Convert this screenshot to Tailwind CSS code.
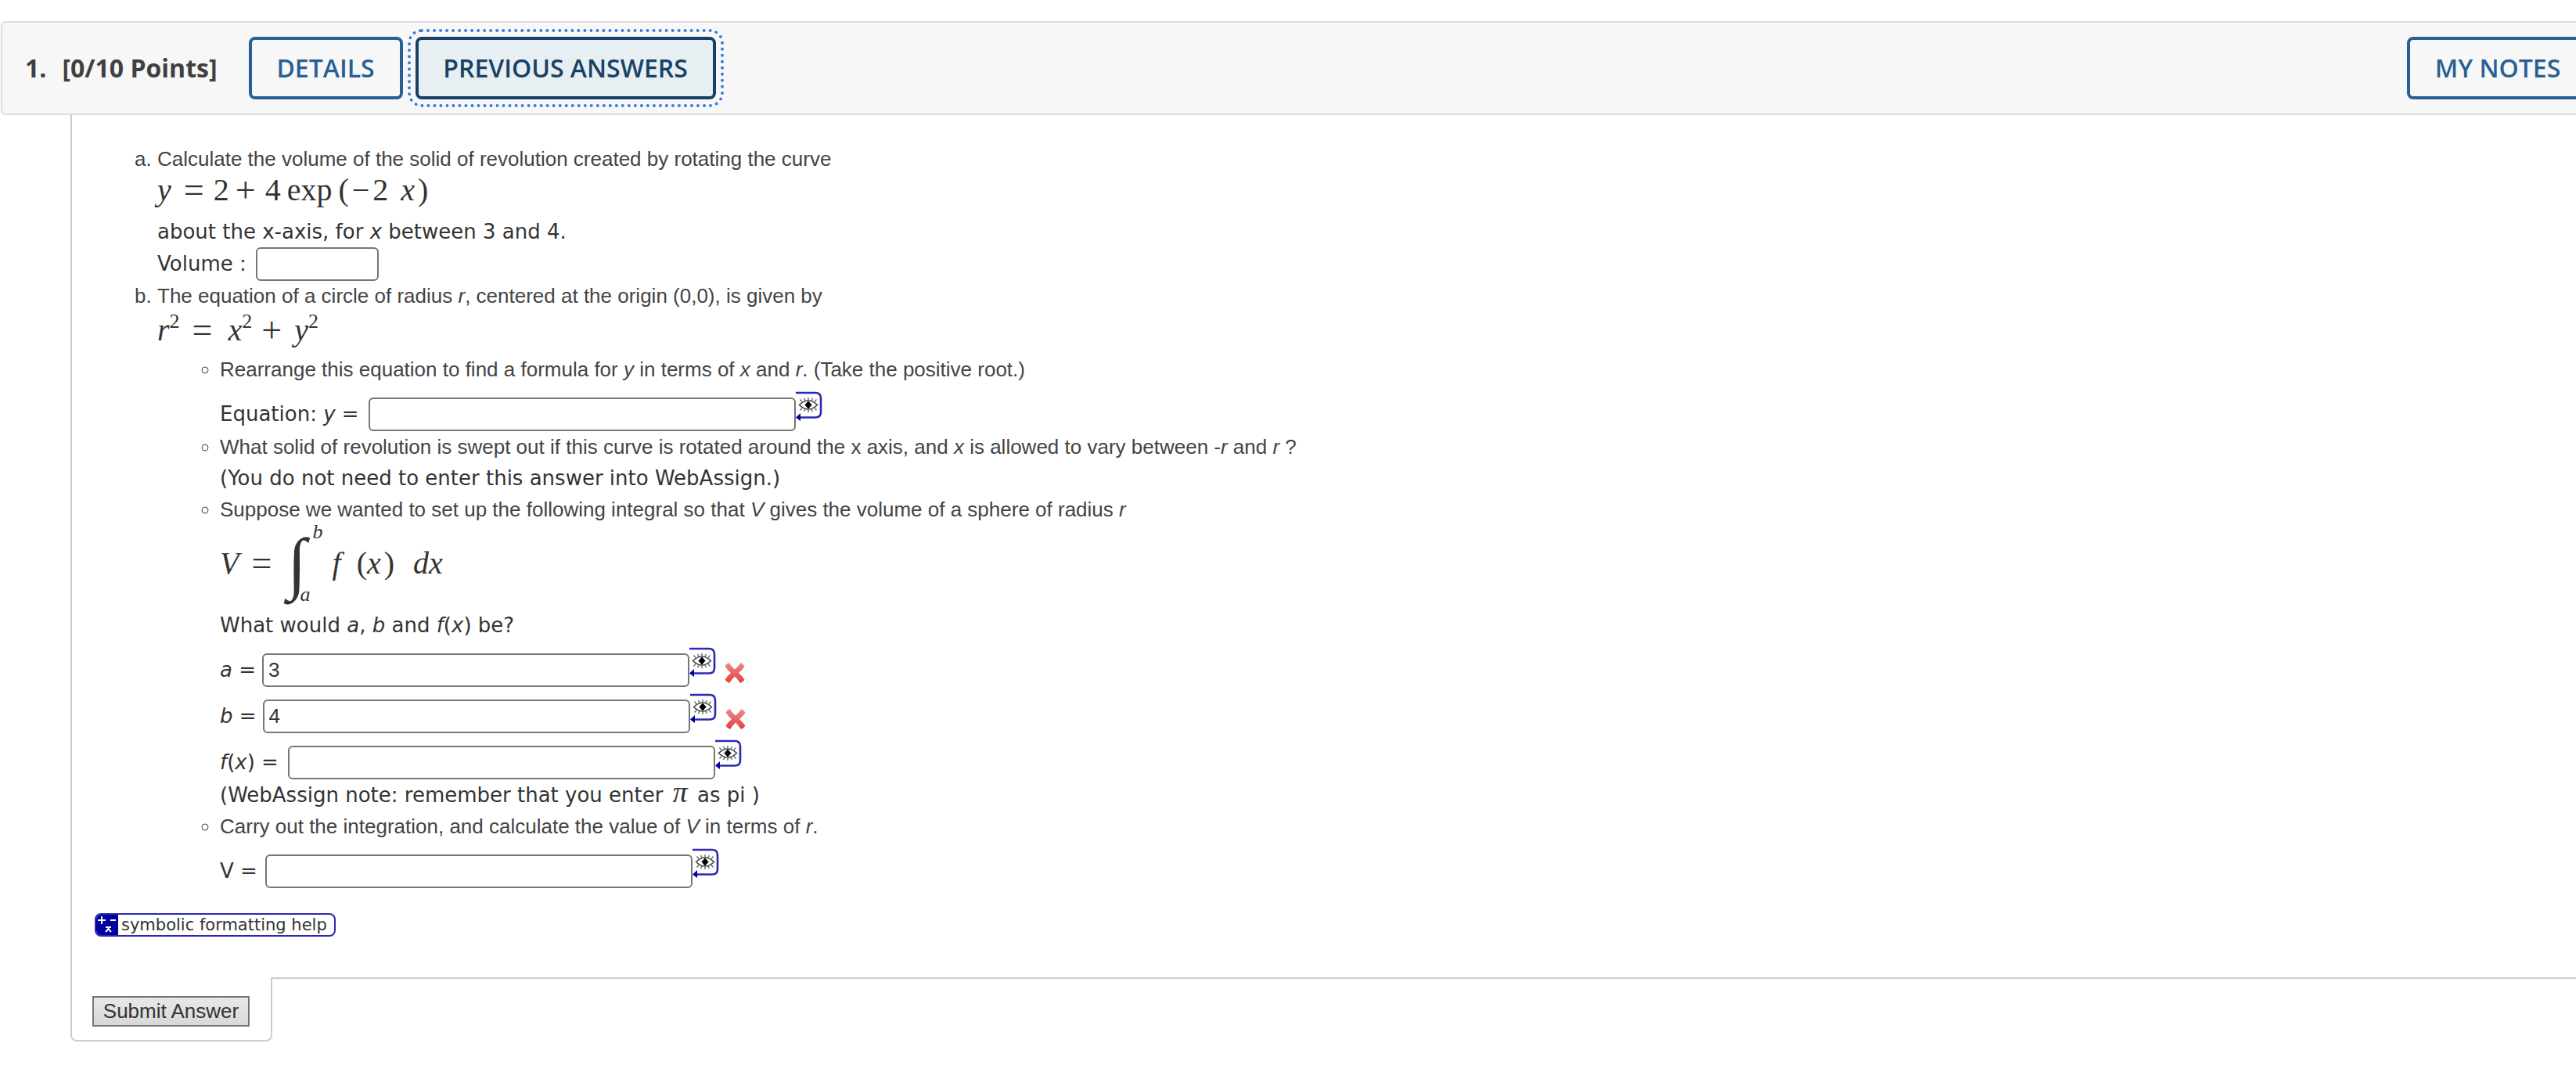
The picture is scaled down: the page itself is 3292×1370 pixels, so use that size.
<!DOCTYPE html>
<html lang="en">
<head>
<meta charset="utf-8">
<title>Question 1</title>
<script src="https://cdn.jsdelivr.net/npm/@tailwindcss/browser@4"></script>
</head>
<body class="bg-white overflow-x-hidden font-['Liberation_Sans',Arial,sans-serif] text-[26px] leading-[40px] text-[#444]">

<svg class="absolute size-0" aria-hidden="true">
  <linearGradient id="red" x1="0" y1="0" x2="0" y2="1"><stop offset="0" stop-color="#f08a8a"/><stop offset="1" stop-color="#df4040"/></linearGradient>
  <symbol id="eye" viewBox="0 0 34 38">
    <path d="M0 2H25Q32 2 32 9V27Q32 33.500 25 33.500H5" fill="none" stroke="#2a2ab0" stroke-width="2.600"/>
    <path d="M0 33.500L6 28V38Z" fill="#00009c"/>
    <path d="M16 11V8M12 12L10.500 9M20 12L21.500 9M8 13.500L5.500 10.500M24 13.500L26.500 10.500M16 24V27M12 23L10.500 26M20 23L21.500 26M8 21.500L5.500 24.500M24 21.500L26.500 24.500" stroke="#777" stroke-width="1.600"/>
    <path d="M4.500 17.500Q16 6.500 27.500 17.500Q16 28.500 4.500 17.500Z" fill="#fff" stroke="#444" stroke-width="1.600"/>
    <path d="M16 13L20 17.500L16 22L12 17.500Z" fill="#000" stroke="#000"/>
  </symbol>
  <symbol id="wrong" viewBox="0 0 28 28">
    <path d="M6.500 1Q3 2 1.500 5.500Q5 11 9 14Q4 18 1.500 22.500Q3.500 26 7 27Q10 22 14 18.500Q18 22 21 27Q24.500 26 26.500 22.500Q23 17.500 19 14Q23 10.500 26.500 6Q25 2.500 21.500 1Q18 6 14 9.500Q10 6 6.500 1Z" fill="url(#red)"/>
  </symbol>
</svg>

<header class="mt-[27px] ml-px h-[120px] flex items-center border-2 border-r-0 border-[#ddd] rounded-l-md bg-[#f7f7f7] pl-[29px] font-['Open_Sans',sans-serif]">
  <h2 class="flex gap-5 text-[32px] font-bold text-[#404040] whitespace-nowrap"><span>1.</span><span>[0/10 Points]</span></h2>
  <button class="ml-10 h-[80px] w-[197px] rounded-lg border-4 border-[#286093] text-[32px] font-semibold text-[#286093]">DETAILS</button>
  <button class="ml-4 h-[80px] w-[384px] rounded-lg border-4 border-[#174266] bg-[#e7eff3] text-[32px] font-semibold text-[#174266] outline-4 outline-dotted outline-offset-6 outline-[#367cde] whitespace-nowrap">PREVIOUS ANSWERS</button>
  <button class="ml-auto -mr-4 h-[80px] w-[232px] shrink-0 rounded-lg border-4 border-[#286093] text-[32px] font-semibold text-[#286093] whitespace-nowrap">MY NOTES</button>
</header>

<main class="ml-[90px]">
  <section class="border-l-2 border-[#ccc] pt-9 pl-[29px] pb-[52px]">
    <ol class="list-[lower-alpha] pl-[80px]">
      <li>
        <p>Calculate the volume of the solid of revolution created by rotating the curve</p>
        <div class="flex h-[53px] items-start font-['Liberation_Serif',serif] text-[40px] leading-[40px] text-[#333]">
          <i>y</i><span class="ml-4 text-[46px]">=</span><span class="ml-3">2</span><span class="ml-2 text-[46px]">+</span><span class="ml-3">4</span><span class="ml-2">exp</span><span class="ml-2">(</span><span class="ml-1">−</span><span class="ml-1">2</span><i class="ml-4">x</i><span class="ml-1">)</span>
        </div>
        <div class="font-['DejaVu_Sans',Verdana,sans-serif] text-[#333]">
          <p>about the x-axis, for <i>x</i> between 3 and 4.</p>
          <div class="flex h-[42px] items-center">
            <label for="vol">Volume :</label>
            <input id="vol" class="ml-3 h-[43px] w-[157px] rounded-md border-2 border-[#767676] bg-white px-1">
          </div>
        </div>
      </li>
      <li>
        <p>The equation of a circle of radius <i>r</i>, centered at the origin (0,0), is given by</p>
        <div class="flex h-[54px] items-start pt-1 font-['Liberation_Serif',serif] text-[40px] leading-[40px] text-[#333]">
          <i>r<sup class="-top-4 not-italic text-[26px]">2</sup></i><span class="ml-4 text-[46px]">=</span><i class="ml-5">x<sup class="-top-4 not-italic text-[26px]">2</sup></i><span class="ml-3 text-[46px]">+</span><i class="ml-4">y<sup class="-top-4 not-italic text-[26px]">2</sup></i>
        </div>
        <ul class="list-[circle] pl-[80px]">
          <li>
            <p>Rearrange this equation to find a formula for <i>y</i> in terms of <i>x</i> and <i>r</i>. (Take the positive root.)</p>
            <div class="flex h-[59px] items-end font-['DejaVu_Sans',Verdana,sans-serif] leading-[43px] text-[#333]">
              <label for="eq">Equation: <i>y</i> =</label>
              <input id="eq" class="ml-3 h-[43px] w-[546px] rounded-md border-2 border-[#767676] bg-white px-1">
              <svg class="mb-[13px] h-[38px] w-[34px]"><use href="#eye"/></svg>
            </div>
          </li>
          <li>
            <p>What solid of revolution is swept out if this curve is rotated around the x axis, and <i>x</i> is allowed to vary between -<i>r</i> and <i>r</i> ?</p>
            <p class="font-['DejaVu_Sans',Verdana,sans-serif] text-[#333]">(You do not need to enter this answer into WebAssign.)</p>
          </li>
          <li>
            <p>Suppose we wanted to set up the following integral so that <i>V</i> gives the volume of a sphere of radius <i>r</i></p>
            <div class="flex h-[108px] items-start font-['Liberation_Serif',serif] text-[40px] leading-[98px] text-[#333]">
              <i>V</i><span class="ml-4 text-[46px]">=</span><span class="ml-5 text-[88px]">∫</span>
              <span class="-ml-2 flex h-[98px] flex-col justify-between text-[26px] italic leading-[18px]"><span class="pl-4">b</span><span>a</span></span>
              <i class="ml-3">f</i><span class="ml-5">(</span><i>x</i><span class="ml-1">)</span><i class="ml-6">dx</i>
            </div>
            <div class="font-['DejaVu_Sans',Verdana,sans-serif] text-[#333]">
              <p>What would <i>a</i>, <i>b</i> and <i>f</i>(<i>x</i>) be?</p>
              <div class="flex h-[59px] items-end leading-[43px]">
                <label for="a"><i>a</i> =</label>
                <input id="a" value="3" class="ml-2 h-[43px] w-[546px] rounded-md border-2 border-[#767676] bg-white px-1.5 font-['Liberation_Sans',Arial,sans-serif]">
                <svg class="mb-[13px] h-[38px] w-[34px]"><use href="#eye"/></svg>
                <svg class="ml-2.5 mb-1 h-[28px] w-[28px]"><use href="#wrong"/></svg>
              </div>
              <div class="flex h-[59px] items-end leading-[43px]">
                <label for="b"><i>b</i> =</label>
                <input id="b" value="4" class="ml-2 h-[43px] w-[546px] rounded-md border-2 border-[#767676] bg-white px-1.5 font-['Liberation_Sans',Arial,sans-serif]">
                <svg class="mb-[13px] h-[38px] w-[34px]"><use href="#eye"/></svg>
                <svg class="ml-2.5 mb-1 h-[28px] w-[28px]"><use href="#wrong"/></svg>
              </div>
              <div class="flex h-[59px] items-end leading-[43px]">
                <label for="fx"><i>f</i>(<i>x</i>) =</label>
                <input id="fx" class="ml-3 h-[43px] w-[546px] rounded-md border-2 border-[#767676] bg-white px-1">
                <svg class="mb-[13px] h-[38px] w-[34px]"><use href="#eye"/></svg>
              </div>
              <p class="h-[40px]">(WebAssign note: remember that you enter <i class="mx-1 font-['Liberation_Serif',serif] text-[38px] leading-[0]">π</i> as pi )</p>
            </div>
          </li>
          <li>
            <p>Carry out the integration, and calculate the value of <i>V</i> in terms of <i>r</i>.</p>
            <div class="flex h-[59px] items-end font-['DejaVu_Sans',Verdana,sans-serif] leading-[43px] text-[#333]">
              <label for="v">V =</label>
              <input id="v" class="ml-2.5 h-[43px] w-[546px] rounded-md border-2 border-[#767676] bg-white px-1">
              <svg class="mb-[13px] h-[38px] w-[34px]"><use href="#eye"/></svg>
            </div>
          </li>
        </ul>
      </li>
    </ol>
    <a href="#" class="mt-8 flex h-[30px] w-[308px] items-center overflow-hidden rounded-lg border-2 border-[#2a2ab0] bg-white font-['DejaVu_Sans',sans-serif] text-[21px] leading-[24px] text-[#333] whitespace-nowrap">
      <svg class="h-[30px] w-[28px] shrink-0 bg-[#00009c]" viewBox="0 0 28 30"><path d="M2 9H12M7 4V14M18 9H25M12 18H19M15.500 18V22M12 24L15.500 20L19 24" fill="none" stroke="#fff" stroke-width="2"/></svg>
      <span class="pl-1">symbolic formatting help</span>
    </a>
  </section>
  <div class="flex">
    <div class="w-[258px] rounded-b-lg border-2 border-t-0 border-[#ccc] pt-6 pl-[26px] pb-[17px]">
      <button class="block h-[39px] w-[201px] border-2 border-[#767676] bg-linear-to-b from-[#e8e8e8] to-[#d8d8d8] leading-[35px] text-[#333]">Submit Answer</button>
    </div>
    <div class="flex-1 border-t-2 border-[#ccc]"></div>
  </div>
</main>
</body>
</html>
